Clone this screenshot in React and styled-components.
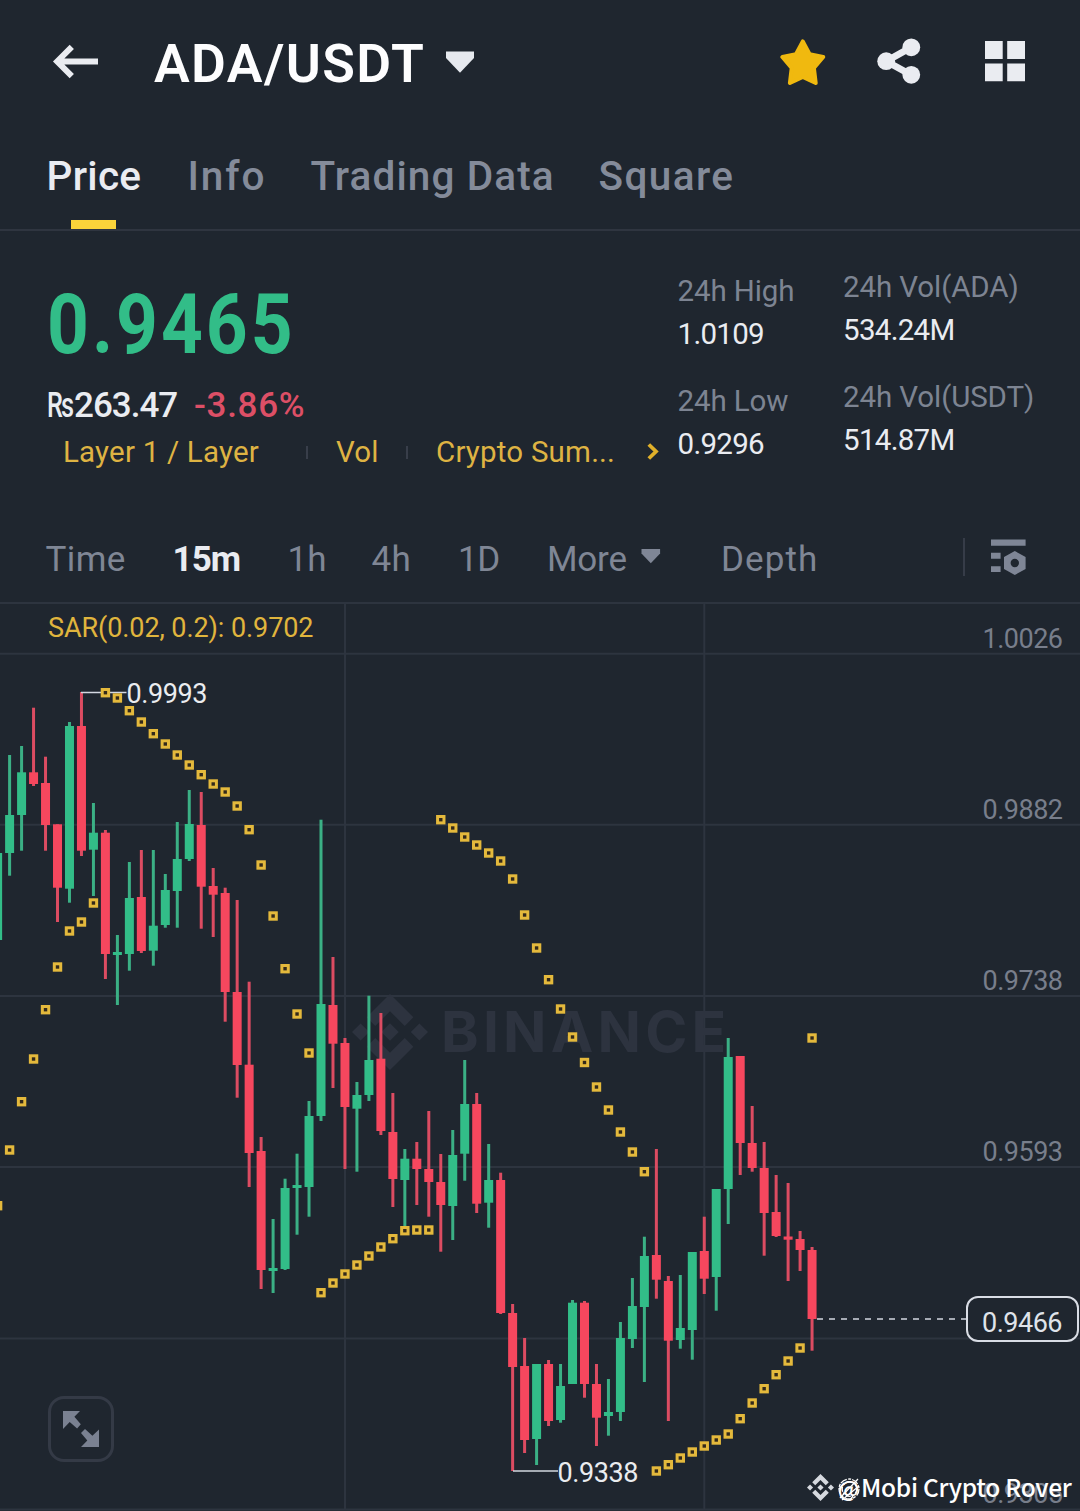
import React from "react";
import styled, { createGlobalStyle } from "styled-components";

const CHART_TOP = 602;
const FIRST_X = 9.6;
const STEP = 11.977;

// [side, high, body top, body bottom, low], the first one is cut by the left edge
const candles = [
  ["g", 853, 853, 940, 940],
  ["g", 755, 815, 853, 875.7],
  ["g", 746, 772.3, 815, 850.7],
  ["r", 707.7, 772.3, 784, 786],
  ["r", 756.7, 783, 825, 850.7],
  ["r", 824.3, 824.3, 887.7, 922],
  ["g", 722, 726, 888.7, 902.7],
  ["r", 692, 726, 850.7, 856],
  ["g", 803, 832.7, 849.7, 896],
  ["r", 830, 832.7, 954, 979],
  ["g", 935, 952, 955, 1005],
  ["g", 862, 898, 954, 970.7],
  ["r", 850, 897, 951, 953],
  ["g", 850, 925.7, 950.7, 965.7],
  ["g", 874, 890, 925, 927.7],
  ["g", 822, 859, 891, 927.7],
  ["g", 790, 824, 859, 861],
  ["r", 792, 825, 886.7, 928.7],
  ["r", 868, 886, 894.7, 937],
  ["r", 887.7, 893, 992, 1021.7],
  ["r", 900, 992, 1065, 1097.7],
  ["r", 981.7, 1064.7, 1153, 1187],
  ["r", 1137, 1151, 1270, 1289],
  ["g", 1219, 1268, 1271, 1293],
  ["g", 1178.7, 1188, 1269, 1270],
  ["g", 1153.7, 1185, 1188, 1234.7],
  ["g", 1101, 1116, 1187, 1216.7],
  ["g", 819.7, 1004, 1116, 1121],
  ["r", 957, 1005, 1043.7, 1088],
  ["r", 1038, 1043, 1107, 1169],
  ["g", 1082, 1095, 1108.7, 1171.7],
  ["g", 995.7, 1060, 1095, 1101],
  ["r", 1013, 1058.7, 1131, 1135],
  ["r", 1093, 1132, 1179, 1207],
  ["g", 1149, 1158.7, 1180, 1228],
  ["r", 1142, 1158.7, 1169, 1205],
  ["r", 1111, 1169, 1182, 1216.7],
  ["r", 1154, 1182, 1205, 1251.7],
  ["g", 1130, 1155, 1206, 1240],
  ["g", 1060, 1104, 1153.7, 1180.7],
  ["r", 1093, 1104, 1203.7, 1213],
  ["g", 1144, 1180, 1202.7, 1227.7],
  ["r", 1172.7, 1180, 1313, 1314],
  ["r", 1304, 1313, 1367, 1471],
  ["r", 1338, 1366, 1440, 1453],
  ["g", 1364, 1364, 1439, 1465],
  ["r", 1360, 1364, 1421, 1426],
  ["g", 1364, 1386, 1420, 1422.7],
  ["g", 1300, 1302.7, 1384, 1384],
  ["r", 1301, 1302.7, 1384, 1397.7],
  ["r", 1364, 1384, 1417.7, 1446],
  ["g", 1379, 1412, 1416, 1435.7],
  ["g", 1322, 1338, 1412, 1421],
  ["g", 1278, 1306, 1339, 1348],
  ["g", 1236.7, 1256, 1307, 1382],
  ["r", 1149, 1255, 1279.7, 1298.7],
  ["r", 1276, 1281, 1340.7, 1421],
  ["g", 1275, 1328, 1340, 1348.7],
  ["g", 1252, 1252, 1330, 1359.7],
  ["r", 1216.7, 1251, 1278.7, 1294],
  ["g", 1189, 1189, 1277, 1310.7],
  ["g", 1038, 1057, 1189, 1224],
  ["r", 1056, 1056, 1143, 1175],
  ["r", 1106, 1143, 1168, 1171.7],
  ["r", 1142, 1168, 1213, 1255.7],
  ["r", 1175, 1212, 1236, 1237],
  ["r", 1183, 1236.5, 1239.7, 1281],
  ["r", 1231, 1239, 1250, 1271],
  ["r", 1247, 1250, 1319, 1350.7],
];

const sar = [
  1205.7, 1150, 1101.7, 1059, 1009.7, 967, 931, 922, 903, 692.7, 698, 710.7,
  722, 733.7, 744, 755, 765, 774.7, 784, 792, 806, 829.7, 865, 916, 968.7, 1014,
  1053, 1292.7, 1283, 1274, 1265, 1256, 1247, 1238.7, 1230.7, 1230, 1230, 819.7,
  828, 837, 845, 853, 861, 879, 915, 948, 979.7, 1009, 1037, 1062.5, 1087, 1110,
  1132, 1152, 1171.7, 1471, 1464.7, 1458, 1452, 1446, 1440, 1434, 1418.7, 1403,
  1388.7, 1374.7, 1361, 1348, 1038,
];

const axis = [
  ["1.0026", 648],
  ["0.9882", 819],
  ["0.9738", 990],
  ["0.9593", 1161],
  ["0.9305", 1503],
];

const candleX = (i) => FIRST_X + (i - 1) * STEP;

const BinanceMark = ({ size }) => (
  <svg width={size} height={size} viewBox="0 0 126.61 126.61" fill="currentColor">
    <path d="M38.73 53.2L63.3 28.63l24.59 24.58 14.3-14.3L63.3 0 24.43 38.9z" />
    <path d="M0 63.31L14.3 49l14.3 14.31-14.3 14.3z" />
    <path d="M38.73 73.41L63.3 98l24.59-24.59 14.31 14.29-38.9 38.91-38.89-38.88z" />
    <path d="M98 63.31L112.3 49l14.31 14.3-14.31 14.32z" />
    <path d="M77.83 63.3L63.3 48.78 48.77 63.3 63.3 77.83z" />
  </svg>
);

const Chart = () => (
  <ChartSvg viewBox={`0 ${CHART_TOP} 1080 909`}>
    <g stroke="#2d343f" strokeWidth="2">
      {[603, 653.8, 824.8, 996, 1167, 1338.5, 1509.5].map((y) => (
        <line key={y} x1="0" x2="1080" y1={y} y2={y} />
      ))}
      <line x1="345" x2="345" y1="603" y2="1509" />
      <line x1="704.3" x2="704.3" y1="603" y2="1509" />
    </g>
    <g fill="#787e8b">
      {axis.map(([label, y]) => (
        <ChartText key={label} x="982.5" y={y} textLength="80.5">
          {label}
        </ChartText>
      ))}
    </g>
  </ChartSvg>
);

const Series = () => (
  <SeriesSvg viewBox={`0 ${CHART_TOP} 1080 909`}>
    {candles.map(([side, high, top, bottom, low], i) => (
      <g key={i}>
        <rect
          x={candleX(i) - 1.5}
          y={high}
          width="3"
          height={low - high}
          fill={side === "g" ? "#3bb085" : "#dc4c62"}
        />
        <rect
          x={candleX(i) - 4.5}
          y={top}
          width="9"
          height={bottom - top}
          fill={side === "g" ? "#32bd88" : "#f6475e"}
        />
      </g>
    ))}
    <g stroke="#d3d8e1" strokeWidth="1.6">
      <line x1="81" x2="126.5" y1="692.5" y2="692.5" />
      <line x1="513" x2="558" y1="1471" y2="1471" />
      <line x1="817" x2="966" y1="1319" y2="1319" strokeDasharray="6 6" />
    </g>
    <g fill="#33291a" stroke="#e4b93c" strokeWidth="3">
      {sar.map((y, i) => (
        <rect key={i} x={candleX(i) - 3.2} y={y - 3.2} width="6.4" height="6.4" />
      ))}
    </g>
    <g fill="#eaecef">
      <ChartText x="126.5" y="703" textLength="81">
        0.9993
      </ChartText>
      <ChartText x="557.5" y="1482" textLength="81">
        0.9338
      </ChartText>
    </g>
    <ChartText x="48" y="637" textLength="265.5" fill="#e0b53d">
      SAR(0.02, 0.2): 0.9702
    </ChartText>
  </SeriesSvg>
);

const App = () => {
  return (
    <>
      <GlobalStyle />
      <Page>
        <Header>
          <svg width="48" height="36" viewBox="52 44 48 36">
            <path
              d="M98 61.5H58M71.8 46.8L57.2 61.5L71.8 76.2"
              fill="none"
              stroke="#eaecf1"
              strokeWidth="6"
            />
          </svg>
          <Title>ADA/USDT</Title>
          <svg width="28" height="24" viewBox="446 50 28 24">
            <path d="M446 51.5h28v6.5l-14 14.7-14-14.7z" fill="#e6e9ef" />
          </svg>
          <Actions>
            <svg width="46" height="48" viewBox="780 38 46 48">
              <path
                d="M802.8 41.4L809.6 54.2L823.2 57L813.9 67.9L815.7 83L802.8 77L789.9 83L791.7 67.9L782.4 57L796 54.2z"
                fill="#f0b90f"
                stroke="#f0b90f"
                strokeWidth="4"
                strokeLinejoin="round"
              />
            </svg>
            <svg width="46" height="48" viewBox="876 38 46 48">
              <path
                d="M911.3 47.3L886.2 61.3L911.3 75"
                fill="none"
                stroke="#eaecf1"
                strokeWidth="6.8"
              />
              <g fill="#eaecf1">
                <circle cx="886.2" cy="61.2" r="8.9" />
                <circle cx="911.3" cy="47.3" r="8.9" />
                <circle cx="911.3" cy="74.8" r="8.9" />
              </g>
            </svg>
            <GridIcon width="42" height="48" viewBox="984 38 42 48">
              <path
                d="M985 41h17.7v18H985zM1007.2 41h17.8v18h-17.8zM985 63.5h17.7v17.8H985zM1007.2 63.5h17.8v17.8h-17.8z"
                fill="#eaecf1"
              />
            </GridIcon>
          </Actions>
        </Header>

        <Tabs>
          <Tab $active $spacing="0.3px">
            Price
            <Indicator />
          </Tab>
          <Tab $spacing="1.9px">Info</Tab>
          <Tab $spacing="1.1px">Trading Data</Tab>
          <Tab $spacing="1.4px">Square</Tab>
        </Tabs>

        <Summary>
          <div>
            <LastPrice>0.9465</LastPrice>
            <FiatRow>
              <Fiat>
                <Rupee>₨</Rupee>
                <span>263.47</span>
              </Fiat>
              <Change>-3.86%</Change>
            </FiatRow>
            <Tags>
              <span>Layer 1 / Layer</span>
              <TagDivider />
              <span>Vol</span>
              <TagDivider />
              <span>Crypto Sum...</span>
              <svg width="14" height="18" viewBox="646 442 14 18">
                <path
                  d="M648.8 443.5l7.2 7-7.2 7"
                  fill="none"
                  stroke="#e0b02a"
                  strokeWidth="3.8"
                />
              </svg>
            </Tags>
          </div>
          <StatColumn $top="40px">
            <StatLabel>24h High</StatLabel>
            <StatValue>1.0109</StatValue>
            <StatLabel>24h Low</StatLabel>
            <StatValue>0.9296</StatValue>
          </StatColumn>
          <StatColumn $top="36px">
            <StatLabel>24h Vol(ADA)</StatLabel>
            <StatValue>534.24M</StatValue>
            <StatLabel>24h Vol(USDT)</StatLabel>
            <StatValue>514.87M</StatValue>
          </StatColumn>
        </Summary>

        <Toolbar>
          <Interval $spacing="0.4px">Time</Interval>
          <Interval $active $spacing="-0.9px">
            15m
          </Interval>
          <Interval $spacing="0.2px">1h</Interval>
          <Interval $spacing="0.4px">4h</Interval>
          <Interval $spacing="-0.4px">1D</Interval>
          <More>
            <Interval $spacing="-0.2px">More</Interval>
            <svg width="20" height="16" viewBox="641 548 20 16">
              <path d="M641.5 549h18.6v4.6l-9.3 9.6-9.3-9.6z" fill="#7f8696" />
            </svg>
          </More>
          <Interval $spacing="1.1px">Depth</Interval>
          <Settings>
            <svg width="36" height="38" viewBox="990 538 36 38">
              <g fill="#7f8696">
                <path d="M991 539.5h34.6v6.3H991zM991 552.8h9.6v5.9H991zM991 566.2h9.6v5.9H991z" />
                <path
                  fillRule="evenodd"
                  d="M1014.8 551l10.8 6.1v11.8l-10.8 6.1-10.8-6.1v-11.8zM1014.8 558.8a4.2 4.2 0 1 0 0 8.4 4.2 4.2 0 1 0 0-8.4z"
                />
              </g>
            </svg>
          </Settings>
        </Toolbar>

        <ChartArea>
          <Chart />
          <Watermark>
            <BinanceMark size={76} />
            <WatermarkText>BINANCE</WatermarkText>
          </Watermark>
          <Series />
          <PriceTag>0.9466</PriceTag>
          <ExpandButton>
            <svg width="38" height="38" viewBox="62 1410 38 38">
              <g fill="#7a8191">
                <path d="M63 1411h17l-5.6 5.7 6.4 7.6-3.7 4.2-7.4-6.5-6.7 6.9z" />
                <path d="M99 1447h-18l6.3-6.5-6.3-7.4 4-4.2 7.4 6.9 6.6-6.4z" />
              </g>
            </svg>
          </ExpandButton>
          <Credit>
            <BinanceMark size={27} />
            <At>
              <AtRings viewBox="0 0 22 24">
                <g fill="none" stroke="#fff" strokeWidth="1.3">
                  <circle cx="11" cy="12" r="10" strokeDasharray="7 1.5 3 1" />
                  <circle cx="11.5" cy="12" r="7.3" strokeDasharray="5 2 2 1" />
                  <path d="M2 21L20 2M4 23L21 9M1 12l5-6M12 23l3-4" />
                </g>
              </AtRings>
              @
            </At>
            <span>Mobi Crypto Rover</span>
          </Credit>
        </ChartArea>
      </Page>
    </>
  );
};

export default App;

const GlobalStyle = createGlobalStyle`
  * {
    box-sizing: border-box;
  }

  body {
    margin: 0;
    background: #1f262f;
    font-family: Roboto, "Liberation Sans", sans-serif;
  }

  svg {
    display: block;
    flex-shrink: 0;
  }
`;

const Page = styled.div`
  width: 1080px;
  height: 1511px;
  overflow: hidden;
  background: #1f262f;
  white-space: nowrap;
`;

const Header = styled.header`
  display: flex;
  align-items: center;
  height: 124px;
  padding: 0 54px 0 52px;
`;

const Title = styled.h1`
  width: 292px;
  margin: 0 0 0 54px;
  padding-top: 4px;
  font-size: 53.5px;
  font-weight: 600;
  line-height: 60px;
  letter-spacing: 1.4px;
  color: #fdfdfe;
`;

const Actions = styled.div`
  display: flex;
  gap: 50px;
  margin-left: auto;
`;

const GridIcon = styled.svg`
  margin-left: 12px;
`;

const Tabs = styled.nav`
  display: grid;
  grid-template-columns: 141px 123px 288px auto;
  height: 107px;
  padding: 27px 0 0 46.5px;
  border-bottom: 2px solid #2f3540;
`;

const Tab = styled.div`
  font-size: 40.5px;
  font-weight: 500;
  line-height: 50px;
  letter-spacing: ${(props) => props.$spacing};
  color: ${(props) => (props.$active ? "#eaecf1" : "#848b9a")};
`;

const Indicator = styled.div`
  width: 45px;
  height: 9px;
  margin: 19px 0 0 24.5px;
  background: #fbd33a;
`;

const Summary = styled.section`
  display: grid;
  grid-template-columns: 677.5px 165.5px auto;
  height: 285px;
`;

const LastPrice = styled.div`
  margin: 54px 0 0 46.5px;
  font-size: 83px;
  font-weight: 700;
  line-height: 80px;
  letter-spacing: 3.4px;
  color: #32bd88;
  transform: scaleX(0.88);
  transform-origin: left;
`;

const FiatRow = styled.div`
  display: grid;
  grid-template-columns: 147.5px auto;
  margin-top: 20px;
  padding-left: 46.5px;
  font-size: 35px;
  font-weight: 500;
  line-height: 41px;
`;

const Fiat = styled.span`
  display: flex;
  letter-spacing: -1px;
  color: #eaecf1;
`;

const Rupee = styled.span`
  width: 27.5px;
  letter-spacing: 0;
  transform: scaleX(0.72);
  transform-origin: left;
`;

const Change = styled.span`
  letter-spacing: 0.7px;
  color: #dd4f66;
`;

const Tags = styled.div`
  display: grid;
  grid-template-columns: 243px 30px 70px 30px 210px 14px;
  align-items: center;
  margin-top: 8px;
  padding-left: 63px;
  font-size: 29.5px;
  line-height: 36px;
  letter-spacing: 0.2px;
  color: #deb343;
`;

const TagDivider = styled.i`
  width: 2px;
  height: 13px;
  background: #383e4a;
`;

const StatColumn = styled.div`
  padding-top: ${(props) => props.$top};
  font-size: 29.5px;
  line-height: 40px;
`;

const StatLabel = styled.div`
  letter-spacing: -0.1px;
  color: #7d8492;
`;

const StatValue = styled.div`
  margin: 3px 0 27px;
  letter-spacing: -0.7px;
  color: #eaecf1;
`;

const Toolbar = styled.div`
  display: grid;
  grid-template-columns: 127px 115px 84px 86.5px 89px 174px 242px auto;
  align-items: center;
  height: 86px;
  padding-left: 45.5px;
`;

const Interval = styled.span`
  padding-top: 2px;
  font-size: 35px;
  font-weight: ${(props) => (props.$active ? 700 : 400)};
  line-height: 44px;
  letter-spacing: ${(props) => props.$spacing || "0"};
  color: ${(props) => (props.$active ? "#eaecf1" : "#7f8695")};
`;

const More = styled.div`
  display: grid;
  grid-template-columns: 94px 20px;
  align-items: center;

  svg {
    margin-bottom: 6px;
  }
`;

const Settings = styled.div`
  width: 63px;
  margin-bottom: 5px;
  padding-left: 25px;
  border-left: 2px solid #363c48;
`;

const ChartArea = styled.section`
  position: relative;
  height: 909px;
`;

const ChartSvg = styled.svg`
  width: 1080px;
  height: 909px;
`;

// the candles go over the watermark, so they sit in a layer of their own
const SeriesSvg = styled(ChartSvg)`
  position: absolute;
  top: 0;
  left: 0;
`;

const ChartText = styled.text`
  font-size: 27px;
`;

const Watermark = styled.div`
  position: absolute;
  top: 392px;
  left: 352px;
  display: flex;
  align-items: center;
  gap: 13px;
  color: #2d333f;
`;

const WatermarkText = styled.span`
  font-family: Inter, sans-serif;
  font-size: 57px;
  font-weight: 700;
  line-height: 76px;
  letter-spacing: 4.2px;
`;

const PriceTag = styled.div`
  position: absolute;
  top: 694px;
  left: 966px;
  width: 113px;
  height: 46px;
  padding: 3px 0 0 14px;
  border: 2px solid #d9dde5;
  border-radius: 12px;
  background: #1f262f;
  font-size: 27px;
  line-height: 44px;
  letter-spacing: -0.5px;
  color: #dfe3ea;
`;

const ExpandButton = styled.button`
  position: absolute;
  top: 794px;
  left: 48px;
  display: flex;
  align-items: center;
  justify-content: center;
  width: 66px;
  height: 66px;
  padding: 0;
  border: 3px solid #343a46;
  border-radius: 16px;
  background: transparent;
`;

const Credit = styled.div`
  position: absolute;
  top: 867px;
  left: 807px;
  display: flex;
  align-items: center;
  height: 36px;
  font-family: "Noto Sans CJK SC", "Noto Sans", sans-serif;
  font-size: 24.5px;
  font-weight: 500;
  line-height: 36px;
  letter-spacing: -0.3px;
  color: #fff;

  > svg {
    color: #d6d9df;
  }
`;

const At = styled.span`
  position: relative;
  width: 23px;
  margin-left: 4px;
  font-size: 22px;
`;

const AtRings = styled.svg`
  position: absolute;
  top: 8px;
  left: 0;
  width: 22px;
  height: 24px;
`;
